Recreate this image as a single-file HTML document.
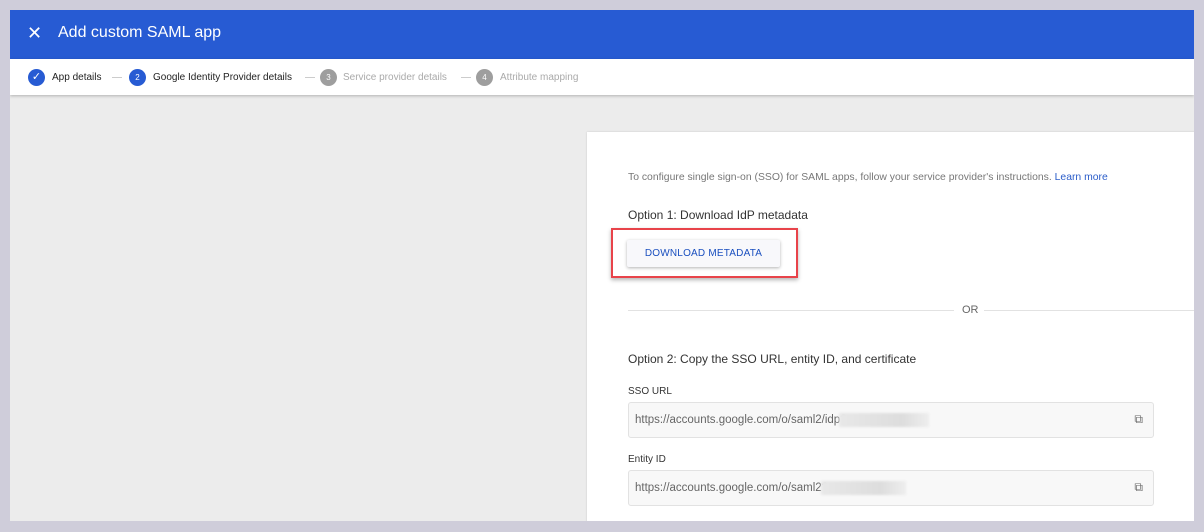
<!DOCTYPE html>
<html><head><style>
*{margin:0;padding:0;box-sizing:border-box}
body{width:1204px;height:532px;background:#cfcdda;font-family:"Liberation Sans",Arial,sans-serif;position:relative;overflow:hidden}
.frame{position:absolute;left:10px;top:10px;width:1184px;height:511px;background:#ececec;overflow:hidden}
.hdr{position:absolute;left:0;top:0;width:100%;height:49px;background:#275bd3;color:#fff}
.hdr .x{position:absolute;left:17px;top:13px;font-size:18px;font-weight:300}
.hdr .t{position:absolute;left:48px;top:14px;font-size:16px}
.steps{position:absolute;left:0;top:49px;width:100%;height:36px;background:#fff;box-shadow:0 1px 3px rgba(0,0,0,.25);font-size:10px;color:#222}
.c{position:absolute;top:10px;width:17px;height:17px;border-radius:50%;color:#fff;font-size:8px;text-align:center;line-height:17px}
.s{position:absolute;top:13px;white-space:nowrap}
.dash{position:absolute;top:18px;width:10px;height:1px;background:#ccc}
.card{position:absolute;left:577px;top:122px;width:620px;height:400px;background:#fff;box-shadow:0 0 2px rgba(0,0,0,.15)}
.card .p{position:absolute;white-space:nowrap}
.btnbox{position:absolute;left:24px;top:96px;width:187px;height:50px;border:2px solid #e8434a;box-shadow:0 2px 4px rgba(0,0,0,.3)}
.btn{position:absolute;left:40px;top:108px;width:153px;height:27px;background:#f8f8fb;box-shadow:0 1px 3px rgba(0,0,0,.3);border-radius:2px;color:#1a4fbf;font-size:10px;text-align:center;line-height:27px;letter-spacing:.2px}
.field{position:absolute;left:41px;width:526px;height:36px;background:#f8f8f8;border:1px solid #e2e2e2;border-radius:3px;font-size:11.5px;color:#666}
.blur{position:absolute;top:10px;height:14px;background:linear-gradient(90deg,#e8e8e8,#ddd 70%,#eee);filter:blur(1px)}
</style></head><body>
<div class="frame">
 <div class="hdr"><span class="x">✕</span><span class="t">Add custom SAML app</span></div>
 <div class="steps">
  <div class="c" style="left:18px;background:#275bd3;font-size:11px">✓</div><span class="s" style="left:42px">App details</span>
  <div class="dash" style="left:102px"></div>
  <div class="c" style="left:119px;background:#275bd3">2</div><span class="s" style="left:143px;width:144px;overflow:hidden">Google Identity Provider details</span>
  <div class="dash" style="left:295px"></div>
  <div class="c" style="left:310px;background:#9e9e9e">3</div><span class="s" style="left:333px;color:#aaa">Service provider details</span>
  <div class="dash" style="left:451px"></div>
  <div class="c" style="left:466px;background:#9e9e9e">4</div><span class="s" style="left:490px;color:#aaa">Attribute mapping</span>
 </div>
 <div class="card">
  <div class="p" style="left:41px;top:40px;font-size:10.4px;color:#777">To configure single sign-on (SSO) for SAML apps, follow your service provider's instructions. <span style="color:#2a5cc9">Learn more</span></div>
  <div class="p" style="left:41px;top:76px;font-size:12px;color:#333">Option 1: Download IdP metadata</div>
  <div class="btnbox"></div>
  <div class="btn">DOWNLOAD METADATA</div>
  <div style="position:absolute;left:41px;top:178px;width:326px;height:1px;background:#e2e2e2"></div>
  <div class="p" style="left:375px;top:172px;font-size:11px;color:#666">OR</div>
  <div style="position:absolute;left:397px;top:178px;width:230px;height:1px;background:#e2e2e2"></div>
  <div class="p" style="left:41px;top:220px;font-size:12px;color:#333">Option 2: Copy the SSO URL, entity ID, and certificate</div>
  <div class="p" style="left:41px;top:254px;font-size:10px;color:#333">SSO URL</div>
  <div class="field" style="top:270px"><span class="p" style="left:6px;top:11px">https://accounts.google.com/o/saml2/idp?</span><div class="blur" style="left:210px;width:90px"></div><span class="p" style="right:10px;top:9px;font-size:12px;color:#666">⧉</span></div>
  <div class="p" style="left:41px;top:322px;font-size:10px;color:#333">Entity ID</div>
  <div class="field" style="top:338px"><span class="p" style="left:6px;top:11px">https://accounts.google.com/o/saml2?</span><div class="blur" style="left:192px;width:85px"></div><span class="p" style="right:10px;top:9px;font-size:12px;color:#666">⧉</span></div>
 </div>
</div>
</body></html>
